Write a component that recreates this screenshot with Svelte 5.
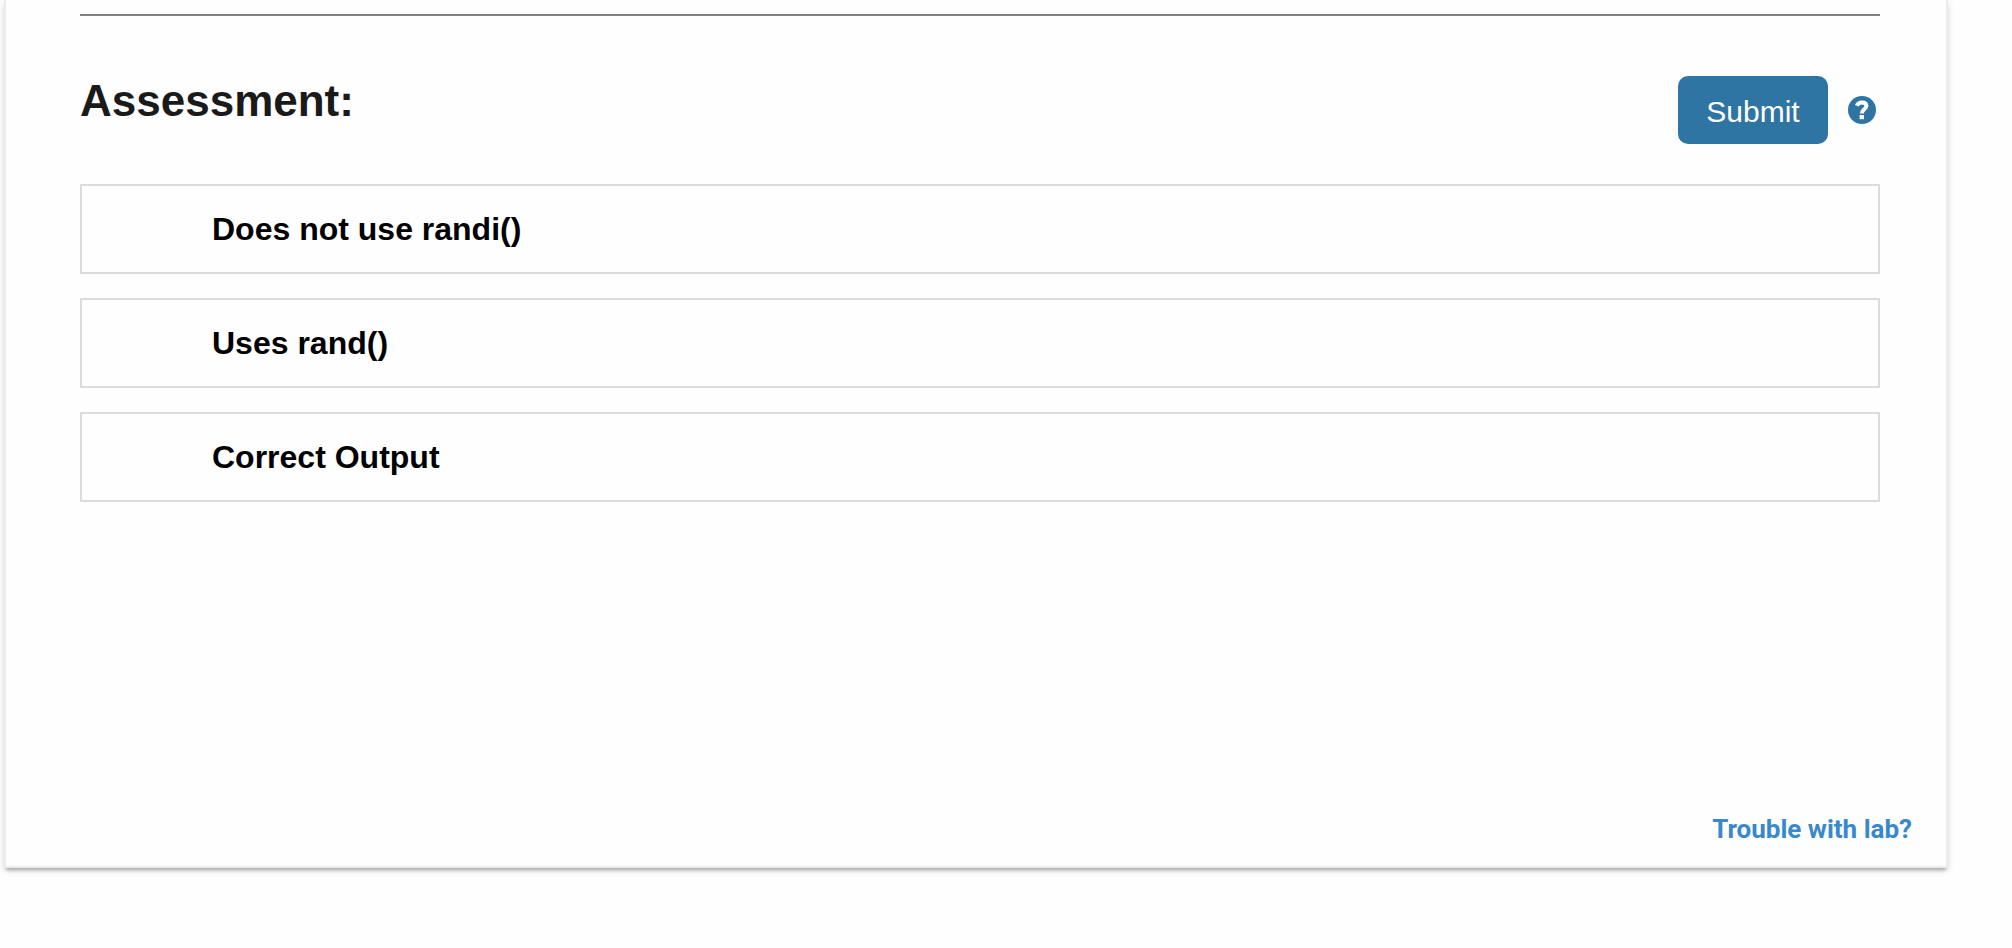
<script lang="ts">
  const tests = [
    { id: 1, name: 'Does not use randi()' },
    { id: 2, name: 'Uses rand()' },
    { id: 3, name: 'Correct Output' }
  ];
</script>

<main class="card">
  <hr />
  <section class="assessment">
    <header class="header">
      <h2>Assessment:</h2>
      <div class="actions">
        <button type="button" class="submit">Submit</button>
        <button type="button" class="help" aria-label="Help">
          <svg viewBox="0 0 28 28" aria-hidden="true">
            <circle cx="14" cy="14" r="14" fill="currentColor" />
            <path d="M8.8 9.8C9.8 7.4 11.4 6.5 14 6.5C16.8 6.5 18.4 8 18.4 10.1C18.4 13.4 13.9 13 13.9 17.4" fill="none" stroke="#fff" stroke-width="4" />
            <rect x="11.6" y="19" width="4.4" height="4.2" fill="#fff" />
          </svg>
        </button>
      </div>
    </header>

    <ul class="tests">
      {#each tests as test (test.id)}
        <li>{test.name}</li>
      {/each}
    </ul>
  </section>

  <footer class="footer">
    <a href="#help">Trouble with lab?</a>
  </footer>
</main>

<style>
  :global(body) { background:#fefefe; font-family:"Liberation Sans", Arial, sans-serif; }
  .card        { margin:0 64px 80px 4px; padding-top:14px; background:#fefefe; border:2px solid #ebebeb; border-top:0; box-shadow:0 4px 4px -2px rgba(0,0,0,.32), 0 2px 8px rgba(0,0,0,.1); }
  hr           { height:2px; margin:0 66px 60px 74px; border:0; background:#808080; }
  .assessment  { min-height:640px; margin:0 66px 0 74px; }
  .header      { display:flex; justify-content:space-between; align-items:flex-start; margin-bottom:40px; }
  h2           { margin:0; font-size:44px; line-height:50px; font-weight:700; color:#1a1a1a; }
  .actions     { display:flex; align-items:center; gap:20px; padding-right:4px; }
  .submit      { min-width:150px; padding:18px 28px 14px; border:0; border-radius:10px; background:#2e75a4; color:#fff; font-family:inherit; font-size:30px; line-height:36px; cursor:pointer; }
  .help        { display:flex; padding:0; border:0; background:none; color:#2e75a4; cursor:pointer; }
  .help svg    { width:28px; height:28px; }
  .tests       { display:flex; flex-direction:column; gap:24px; margin:0; padding:0; list-style:none; }
  .tests li    { padding:25px 24px 25px 130px; border:2px solid #dcdcdc; font-size:32px; line-height:36px; font-weight:700; color:#000; }
  .footer      { padding:96px 34px 20px; text-align:right; }
  .footer a    { display:inline-block; font-family:Roboto, sans-serif; font-size:26px; line-height:34px; font-weight:700; color:#3889cc; text-decoration:none; }
</style>
